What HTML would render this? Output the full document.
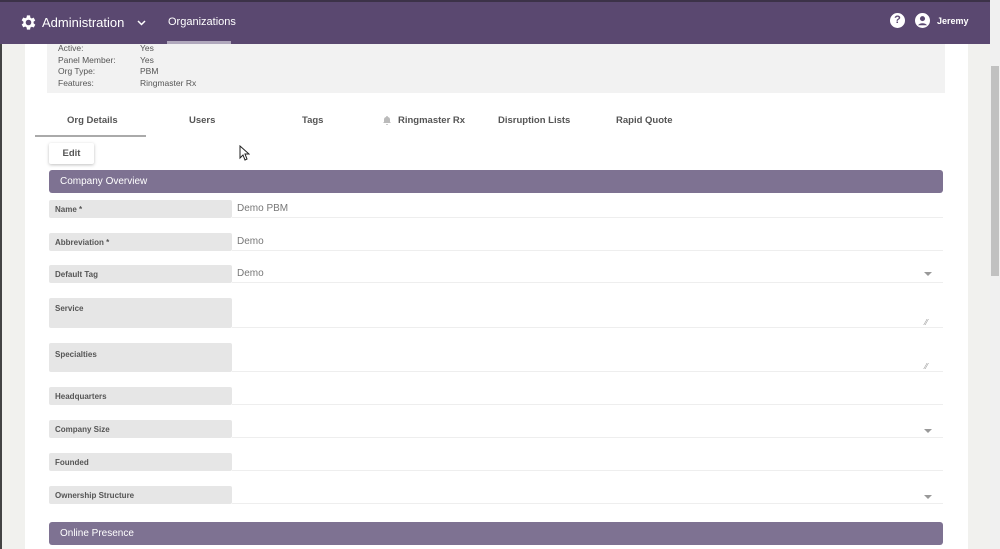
<!DOCTYPE html>
<html><head><style>
*{margin:0;padding:0;box-sizing:border-box}
body{width:1000px;height:549px;overflow:hidden;background:#fff;font-family:"Liberation Sans",sans-serif;position:relative;color:#555}
.a{position:absolute}
.lab{position:absolute;left:49px;width:183px;background:#e6e6e6;border-radius:2px;font-size:8px;font-weight:bold;color:#555;padding-left:6px}
.val{position:absolute;left:232px;width:711px;border-bottom:1px solid #eee;font-size:10px;color:#777;padding-left:5px}
.bar{position:absolute;left:49px;width:894px;height:23px;background:#7e7292;border-radius:3px;color:#fff;font-size:10px;line-height:24px;padding-left:11px}
.tab{position:absolute;top:115px;font-size:9.5px;font-weight:bold;color:#555}
.dd{position:absolute;left:924px;width:0;height:0;border-left:4px solid transparent;border-right:4px solid transparent;border-top:4px solid #999}
.rs{position:absolute;left:925px;font-size:8px;color:#999}
</style></head><body>
<div class="a" style="left:0;top:0;width:25px;height:549px;background:#f1f1ee"></div>
<div class="a" style="left:0;top:0;width:2px;height:549px;background:#444"></div>
<div class="a" style="left:968px;top:0;width:32px;height:549px;background:#f1f1ee"></div>
<div class="a" style="left:990px;top:0;width:10px;height:549px;background:#f0f0f0"></div>
<div class="a" style="left:991px;top:66px;width:8px;height:210px;background:#c1c1c1"></div>
<div class="a" style="left:0;top:0;width:990px;height:44px;background:#5a4870;border-top:2px solid #3c3248"></div>
<svg class="a" style="left:19px;top:13px" width="19" height="19" viewBox="0 0 24 24"><path fill="#fff" d="M19.4 13a7.5 7.5 0 0 0 0-2l2.1-1.6-2-3.5-2.5 1a7 7 0 0 0-1.7-1L15 3h-4l-.4 2.7a7 7 0 0 0-1.7 1l-2.5-1-2 3.5L6.6 11a7.5 7.5 0 0 0 0 2l-2.2 1.6 2 3.5 2.5-1a7 7 0 0 0 1.7 1L11 21h4l.4-2.7a7 7 0 0 0 1.7-1l2.5 1 2-3.5zM13 15.5a3.5 3.5 0 1 1 0-7 3.5 3.5 0 0 1 0 7z" transform="translate(-1 0)"/></svg>
<div class="a" style="left:42px;top:15px;font-size:13px;color:#fff">Administration</div>
<svg class="a" style="left:137px;top:20px" width="9" height="6"><path d="M1 1l3.5 3.5L8 1" stroke="#fff" stroke-width="1.5" fill="none"/></svg>
<div class="a" style="left:168px;top:16px;font-size:11px;color:#fff">Organizations</div>
<div class="a" style="left:167px;top:41px;width:64px;height:3px;background:#b0a8bc"></div>
<div class="a" style="left:890px;top:13px;width:15px;height:15px;border-radius:50%;background:#fff;color:#5a4870;font-size:11px;font-weight:bold;text-align:center;line-height:15px">?</div>
<svg class="a" style="left:915px;top:13px" width="15" height="15" viewBox="0 0 16 16"><circle cx="8" cy="8" r="8" fill="#fff"/><circle cx="8" cy="6" r="2.7" fill="#5a4870"/><path d="M3.2 13a5.5 4 0 0 1 9.6 0z" fill="#5a4870"/></svg>
<div class="a" style="left:937px;top:16px;font-size:9px;font-weight:bold;color:#fff">Jeremy</div>
<div class="a" style="left:47px;top:44px;width:898px;height:49px;background:#f2f2f2"></div>
<div class="a" style="left:58px;top:43px;font-size:8.5px;line-height:11.5px;color:#555">Active:<br>Panel Member:<br>Org Type:<br>Features:</div>
<div class="a" style="left:140px;top:43px;font-size:8.5px;line-height:11.5px;color:#555">Yes<br>Yes<br>PBM<br>Ringmaster Rx</div>
<div class="tab" style="left:67px">Org Details</div>
<div class="a" style="left:35px;top:135px;width:111px;height:2px;background:#aaa"></div>
<div class="tab" style="left:189px">Users</div>
<div class="tab" style="left:302px">Tags</div>
<svg class="a" style="left:383px;top:116px" width="8" height="9" viewBox="0 0 8 9"><path d="M4 0a1 1 0 0 1 1 1 2.7 2.7 0 0 1 2 2.6V6l1 1H0l1-1V3.6A2.7 2.7 0 0 1 3 1a1 1 0 0 1 1-1zM3 8h2a1 1 0 0 1-2 0z" fill="#bbb"/></svg>
<div class="tab" style="left:398px">Ringmaster Rx</div>
<div class="tab" style="left:498px">Disruption Lists</div>
<div class="tab" style="left:616px">Rapid Quote</div>
<div class="a" style="left:49px;top:143px;width:45px;height:21px;background:#fff;box-shadow:0 1px 3px rgba(0,0,0,.25);border-radius:2px;font-size:9.5px;color:#555;text-align:center;line-height:21px;font-weight:bold">Edit</div>
<svg class="a" style="left:239px;top:145px" width="11" height="16" viewBox="0 0 11 16"><path d="M1 1v12l3-3 2 5 2-1-2-5h4z" fill="#fff" stroke="#222" stroke-width="1"/></svg>
<div class="bar" style="top:170px">Company Overview</div>
<div class="lab" style="top:200px;height:18px;line-height:19px">Name *</div><div class="val" style="top:200px;height:18px;line-height:18px">Demo PBM</div>
<div class="lab" style="top:233px;height:18px;line-height:19px">Abbreviation *</div><div class="val" style="top:233px;height:18px;line-height:18px">Demo</div>
<div class="lab" style="top:265px;height:18px;line-height:19px">Default Tag</div><div class="val" style="top:265px;height:18px;line-height:17px">Demo</div><div class="dd" style="top:272px"></div>
<div class="lab" style="top:298px;height:30px;padding-top:6px">Service</div><div class="val" style="top:298px;height:30px"></div><div class="rs" style="top:318px">⁄⁄</div>
<div class="lab" style="top:343px;height:29px;padding-top:7px">Specialties</div><div class="val" style="top:343px;height:29px"></div><div class="rs" style="top:362px">⁄⁄</div>
<div class="lab" style="top:387px;height:18px;line-height:19px">Headquarters</div><div class="val" style="top:387px;height:18px"></div>
<div class="lab" style="top:420px;height:18px;line-height:19px">Company Size</div><div class="val" style="top:420px;height:18px"></div><div class="dd" style="top:429px"></div>
<div class="lab" style="top:453px;height:18px;line-height:19px">Founded</div><div class="val" style="top:453px;height:18px"></div>
<div class="lab" style="top:486px;height:18px;line-height:19px">Ownership Structure</div><div class="val" style="top:486px;height:18px"></div><div class="dd" style="top:495px"></div>
<div class="bar" style="top:522px">Online Presence</div>
</body></html>
